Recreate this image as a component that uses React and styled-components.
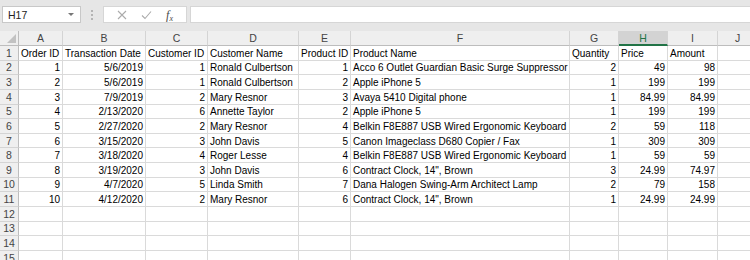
import React from 'react'
import styled, { createGlobalStyle } from 'styled-components'

const GlobalStyle = createGlobalStyle`
    html, body {
        margin: 0;
        padding: 0;
        background: #ffffff;
    }
    body {
        font-family: 'Liberation Sans', Arial, sans-serif;
        width: 750px;
        height: 260px;
        overflow: hidden;
    }
`

const COLS = '19px 44px 83px 62px 91px 52px 219px 49px 49px 50px 40px'

const Window = styled.div`
    width: 750px;
    height: 260px;
    overflow: hidden;
    display: flex;
    flex-direction: column;
`

const TopBar = styled.div`
    height: 31px;
    box-sizing: border-box;
    padding: 6px 0 8px 2px;
    display: flex;
    align-items: stretch;
    background: #e6e6e6;
    flex-shrink: 0;
`

const NameBox = styled.div`
    width: 79px;
    box-sizing: border-box;
    background: #fff;
    border: 1px solid #c8c8c8;
    display: flex;
    align-items: center;
    justify-content: space-between;
    padding: 0 6px 0 5px;
    font-size: 10.5px;
    color: #222;
`

const Caret = styled.span`
    width: 0;
    height: 0;
    border-left: 3px solid transparent;
    border-right: 3px solid transparent;
    border-top: 3px solid #777;
`

const Grip = styled.div`
    width: 22px;
    display: flex;
    flex-direction: column;
    align-items: center;
    justify-content: center;
    gap: 2px;

    span {
        width: 2px;
        height: 2px;
        background: #b4b4b4;
    }
`

const FormulaButtons = styled.div`
    width: 84px;
    box-sizing: border-box;
    background: #fff;
    border: 1px solid #d6d6d6;
    display: flex;
    align-items: center;
    justify-content: space-around;
    padding: 0 6px;
`

const Fx = styled.span`
    font-family: 'Liberation Serif', 'Times New Roman', serif;
    font-style: italic;
    font-size: 12px;
    color: #4a4a4a;
    line-height: 1;

    small {
        font-size: 8px;
        position: relative;
        top: 2px;
    }
`

const FormulaInput = styled.div`
    flex: 1;
    margin-left: 3px;
    background: #fff;
    border: 1px solid #d6d6d6;
    border-right: none;
`

const Sheet = styled.div`
    display: flex;
    flex-direction: column;
    font-size: 10px;
    color: #000;
`

const Row = styled.div`
    display: grid;
    grid-template-columns: ${COLS};
    height: ${p => p.h}px;
    flex-shrink: 0;
`

const HeadCell = styled.div`
    background: ${p => (p.active ? '#d3d3d3' : '#efefef')};
    color: ${p => (p.active ? '#217346' : '#444')};
    border-right: 1px solid #d4d4d4;
    border-bottom: ${p => (p.active ? '2px solid #217346' : '1px solid #bdbdbd')};
    display: flex;
    align-items: center;
    justify-content: center;
    font-size: 10.5px;
    box-sizing: border-box;
`

const Corner = styled.div`
    background: #efefef;
    border-right: 1px solid #bdbdbd;
    border-bottom: 1px solid #bdbdbd;
    box-sizing: border-box;
    display: flex;
    align-items: flex-end;
    justify-content: flex-end;
    padding: 0 2px 2px 0;
`

const RowNum = styled.div`
    background: #efefef;
    color: #444;
    border-right: 1px solid #bdbdbd;
    border-bottom: 1px solid #d4d4d4;
    box-sizing: border-box;
    display: flex;
    align-items: center;
    justify-content: center;
    font-size: 10.5px;
`

const Cell = styled.div`
    border-right: 1px solid #dadada;
    border-bottom: 1px solid #dadada;
    box-sizing: border-box;
    display: flex;
    align-items: center;
    justify-content: ${p => (p.num ? 'flex-end' : 'flex-start')};
    padding: 1px 2px 0 2px;
    white-space: nowrap;
    overflow: visible;
    min-width: 0;
`

const letters = ['A', 'B', 'C', 'D', 'E', 'F', 'G', 'H', 'I', 'J']

const header = ['Order ID', 'Transaction Date', 'Customer ID', 'Customer Name', 'Product ID', 'Product Name', 'Quantity', 'Price', 'Amount', '']

const data = [
    [1, '5/6/2019', 1, 'Ronald Culbertson', 1, 'Acco 6 Outlet Guardian Basic Surge Suppressor', 2, 49, 98],
    [2, '5/6/2019', 1, 'Ronald Culbertson', 2, 'Apple iPhone 5', 1, 199, 199],
    [3, '7/9/2019', 2, 'Mary Resnor', 3, 'Avaya 5410 Digital phone', 1, 84.99, 84.99],
    [4, '2/13/2020', 6, 'Annette Taylor', 2, 'Apple iPhone 5', 1, 199, 199],
    [5, '2/27/2020', 2, 'Mary Resnor', 4, 'Belkin F8E887 USB Wired Ergonomic Keyboard', 2, 59, 118],
    [6, '3/15/2020', 3, 'John Davis', 5, 'Canon Imageclass D680 Copier / Fax', 1, 309, 309],
    [7, '3/18/2020', 4, 'Roger Lesse', 4, 'Belkin F8E887 USB Wired Ergonomic Keyboard', 1, 59, 59],
    [8, '3/19/2020', 3, 'John Davis', 6, 'Contract Clock, 14", Brown', 3, 24.99, 74.97],
    [9, '4/7/2020', 5, 'Linda Smith', 7, 'Dana Halogen Swing-Arm Architect Lamp', 2, 79, 158],
    [10, '4/12/2020', 2, 'Mary Resnor', 6, 'Contract Clock, 14", Brown', 1, 24.99, 24.99],
]

// text columns are left aligned, everything else right aligned
const textCols = [3, 5]

const ROW_H = 14.64

const App = () => {
    const blanks = [12, 13, 14, 15]

    return (
        <Window>
            <GlobalStyle />
            <TopBar>
                <NameBox>H17<Caret /></NameBox>
                <Grip><span /><span /><span /></Grip>
                <FormulaButtons>
                    <svg width="10" height="10" viewBox="0 0 10 10">
                        <path d="M1 1 L9 9 M9 1 L1 9" stroke="#ababab" strokeWidth="1.1" fill="none" />
                    </svg>
                    <svg width="11" height="10" viewBox="0 0 11 10">
                        <path d="M1 5.5 L4 8.5 L10 1.5" stroke="#ababab" strokeWidth="1.1" fill="none" />
                    </svg>
                    <Fx>f<small>x</small></Fx>
                </FormulaButtons>
                <FormulaInput />
            </TopBar>

            <Sheet>
                <Row h={15}>
                    <Corner>
                        <svg width="9" height="9" viewBox="0 0 9 9">
                            <path d="M9 0 L9 9 L0 9 Z" fill="#c2c2c2" />
                        </svg>
                    </Corner>
                    {letters.map(l => (
                        <HeadCell key={l} active={l === 'H'}>{l}</HeadCell>
                    ))}
                </Row>

                <Row h={ROW_H}>
                    <RowNum>1</RowNum>
                    {header.map((h, i) => <Cell key={i}>{h}</Cell>)}
                </Row>

                {data.map((r, idx) => (
                    <Row h={ROW_H} key={idx}>
                        <RowNum>{idx + 2}</RowNum>
                        {r.map((v, i) => (
                            <Cell key={i} num={!textCols.includes(i)}>{v}</Cell>
                        ))}
                        <Cell />
                    </Row>
                ))}

                {blanks.map(n => (
                    <Row h={ROW_H} key={n}>
                        <RowNum>{n}</RowNum>
                        {letters.map(l => <Cell key={l} />)}
                    </Row>
                ))}
            </Sheet>
        </Window>
    )
}

export default App
